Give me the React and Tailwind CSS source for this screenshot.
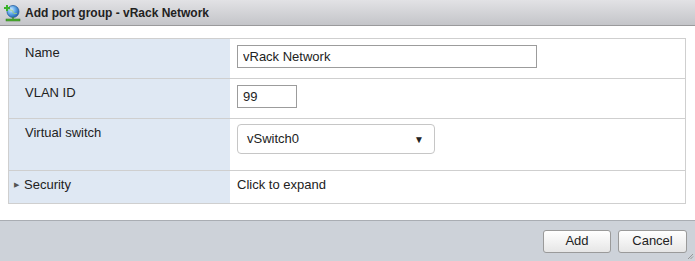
import React from 'react';

const FONT = { fontFamily: '"Liberation Sans", Arial, Helvetica, sans-serif' };

function PortGroupIcon() {
  return (
    <svg width="18" height="18" viewBox="0 0 18 18">
      <defs>
        <radialGradient id="globe" cx="0.35" cy="0.35" r="0.7">
          <stop offset="0" stopColor="#d6ecff" />
          <stop offset="0.5" stopColor="#5fa8e8" />
          <stop offset="1" stopColor="#1f5fae" />
        </radialGradient>
      </defs>
      <circle cx="10" cy="7.5" r="6" fill="url(#globe)" stroke="#2a5f9e" strokeWidth="0.8" />
      <path d="M6 5.5c1.5 1 2.5 0.2 3.5 1.2s0 2 1.5 2.8 2-0.8 3 0.2" fill="none" stroke="#9fd17a" strokeWidth="1" />
      <rect x="9.3" y="13" width="1.4" height="2" fill="#3f8f2a" />
      <rect x="3" y="15" width="14" height="2" fill="#4cae2f" stroke="#2f7a1c" strokeWidth="0.5" />
      <rect x="1" y="3" width="6" height="2" fill="#3cb22a" />
      <rect x="3" y="1" width="2" height="6" fill="#3cb22a" />
    </svg>
  );
}

function Row({ label, height, arrow, children }) {
  return (
    <div className={`flex border-b border-[#cfcfcf] last:border-b-0 ${height}`}>
      <div className="w-[221px] shrink-0 bg-[#dfe8f3] pl-[16px] pt-[6px] text-[13px] text-[#222] flex items-start">
        {arrow && <span className="ml-[-11px] mr-[5px] text-[7px] leading-[16px] text-[#555]">▶</span>}
        <span className="leading-[16px]">{label}</span>
      </div>
      <div className="flex-1 pl-[7px] pt-[5px]">{children}</div>
    </div>
  );
}

export default function App() {
  return (
    <div className="w-[695px] h-[261px] flex flex-col bg-white overflow-hidden relative" style={FONT}>
      <div className="h-[26px] shrink-0 flex items-center gap-[4px] pl-[3px] bg-gradient-to-b from-[#e2e2e5] to-[#c4c5c9] border-b border-[#9a9a9c]">
        <PortGroupIcon />
        <span className="text-[12px] font-bold text-[#222]">Add port group - vRack Network</span>
      </div>

      <div className="flex-1 pt-[12px] px-[8px]">
        <div className="w-[678px] border border-[#cfcfcf] flex flex-col">
          <Row label="Name" height="h-[40px]">
            <input
              readOnly
              value="vRack Network"
              className="w-[300px] h-[23px] border border-[#9c9c9c] px-[5px] text-[13px] text-[#222] outline-none"
            />
          </Row>
          <Row label="VLAN ID" height="h-[40px]">
            <input
              readOnly
              value="99"
              className="w-[60px] h-[23px] border border-[#9c9c9c] px-[5px] text-[13px] text-[#222] outline-none"
            />
          </Row>
          <Row label="Virtual switch" height="h-[52px]">
            <div className="w-[198px] h-[30px] border border-[#c6c6c6] rounded-[4px] flex items-center justify-between pl-[9px] pr-[10px] text-[13px] text-[#222]">
              <span>vSwitch0</span>
              <span className="text-[10px] text-[#222]">▼</span>
            </div>
          </Row>
          <Row label="Security" height="h-[32px]" arrow>
            <span className="text-[13px] text-[#222] leading-[16px] block pt-[1px]">Click to expand</span>
          </Row>
        </div>
      </div>

      <div className="h-[41px] shrink-0 bg-[#cdd2d9] border-t border-[#a9adb3] flex items-center justify-end gap-[7px] pr-[8px]">
        <button className="w-[68px] h-[23px] rounded-[3px] border border-[#9a9a9a] bg-gradient-to-b from-white to-[#e6e6e6] text-[13px] text-[#222]">
          Add
        </button>
        <button className="w-[69px] h-[23px] rounded-[3px] border border-[#9a9a9a] bg-gradient-to-b from-white to-[#e6e6e6] text-[13px] text-[#222]">
          Cancel
        </button>
      </div>

      <svg className="absolute right-[1px] bottom-[1px]" width="7" height="7" viewBox="0 0 7 7">
        <path d="M6 1L1 6M6 3.5L3.5 6" stroke="#888" strokeWidth="0.8" />
      </svg>
    </div>
  );
}
